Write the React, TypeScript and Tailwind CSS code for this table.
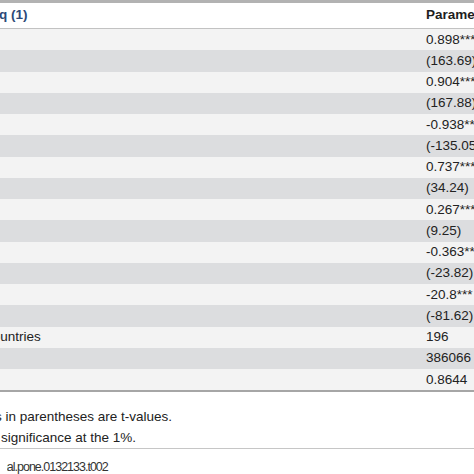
import React from "react";

const values = [
  "0.898***",
  "(163.69)",
  "0.904***",
  "(167.88)",
  "-0.938***",
  "(-135.05)",
  "0.737***",
  "(34.24)",
  "0.267***",
  "(9.25)",
  "-0.363***",
  "(-23.82)",
  "-20.8***",
  "(-81.62)",
  "196",
  "386066",
  "0.8644",
];

const labels: Record<number, string> = { 14: "Countries" };

export default function App() {
  return (
    <div className="w-[474px] h-[474px] overflow-hidden bg-white text-[#222] font-['Liberation_Sans',Arial,sans-serif] text-[13.5px]">
      <div className="h-[3px] bg-[#b2b2b2]" />
      <div className="flex h-[26px] items-center border-b border-[#c2c2c2] font-bold">
        <div className="w-[426px] shrink-0 overflow-hidden whitespace-nowrap">
          <span className="ml-[-10px] inline-block text-[#2d4a78]">Eq (1)</span>
        </div>
        <div className="whitespace-nowrap text-[#1e1e1e]">Parameters</div>
      </div>
      <div className="border-b-2 border-[#a6a6a6]">
        {values.map((v, i) => (
          <div
            key={i}
            className={
              i % 2 === 0
                ? "flex h-[21.25px] items-center bg-[#f3f3f3]"
                : "flex h-[21.25px] items-center bg-[#dcdddf]"
            }
          >
            <div className="w-[426px] shrink-0 overflow-hidden whitespace-nowrap">
              {labels[i] ? (
                <span className="ml-[-17px] inline-block">{labels[i]}</span>
              ) : null}
            </div>
            <div className="whitespace-nowrap">{v}</div>
          </div>
        ))}
      </div>
      <div className="pt-[14px] leading-[21px] text-[#222]">
        <div className="overflow-hidden whitespace-nowrap">
          <span className="ml-[-38.5px] inline-block">Values in parentheses are t-values.</span>
        </div>
        <div className="overflow-hidden whitespace-nowrap">
          <span className="ml-[-70.3px] inline-block">*** denotes significance at the 1%.</span>
        </div>
      </div>
      <div className="border-t border-[#c6c6c6] pt-[9px] leading-[18px]">
        <div className="ml-[7px] overflow-hidden whitespace-nowrap">
          <span className="ml-[-23px] inline-block text-[12.5px] tracking-[-1px] text-[#333]">
            journal.pone.0132133.t002
          </span>
        </div>
      </div>
    </div>
  );
}
